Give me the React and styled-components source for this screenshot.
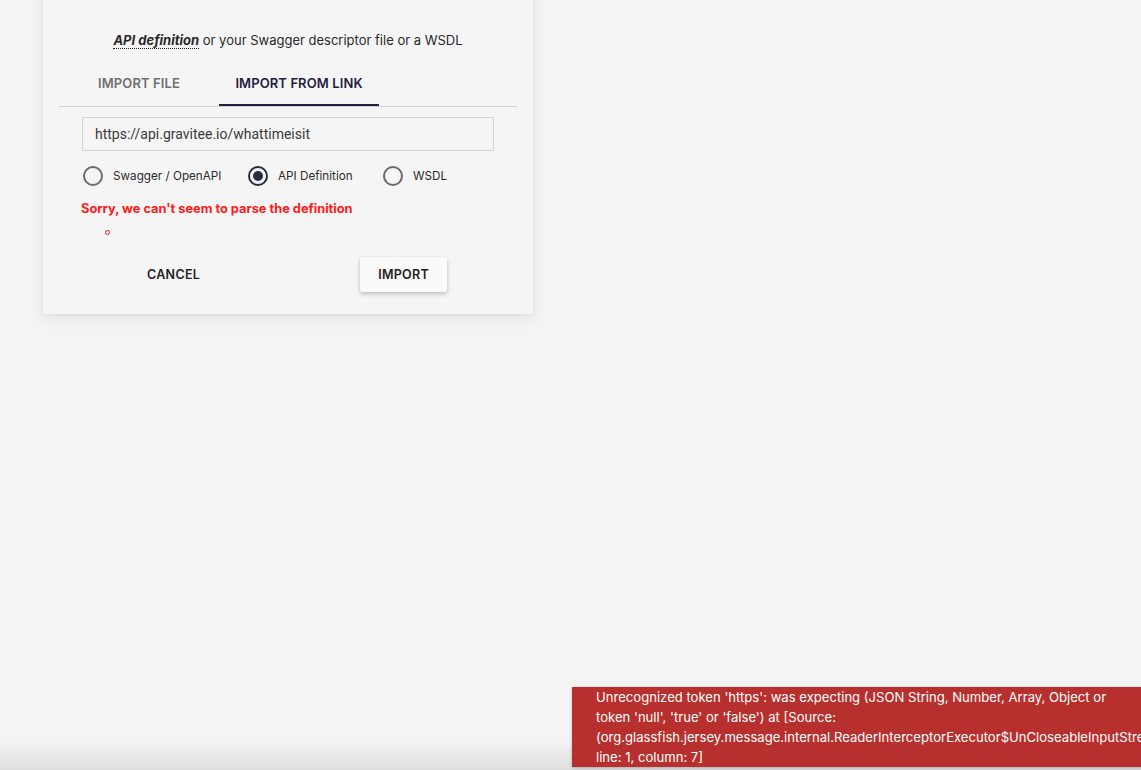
import React, { useState } from "react";
import styled, { createGlobalStyle } from "styled-components";

const Global = createGlobalStyle`
  html, body {
    margin: 0;
    padding: 0;
    background: #f4f4f4;
    font-family: Inter, "Liberation Sans", sans-serif;
  }
  #root {
    height: 770px;
    overflow: hidden;
    position: relative;
  }
`;

const Page = styled.div`
  height: 770px;
  display: flex;
  flex-direction: column;
  position: relative;
`;

const Main = styled.div`
  flex: 1;
  padding-left: 43px;
`;

const Footer = styled.div`
  height: 28px;
  background: linear-gradient(#f3f3f3, #dedede);
`;

const Dialog = styled.div`
  width: 490px;
  margin-top: -20px;
  padding: 20px 16px 22px;
  box-sizing: border-box;
  background: #f5f5f5;
  box-shadow: 0 4px 14px rgba(0, 0, 0, 0.08), 0 1px 3px rgba(0, 0, 0, 0.04);
`;

const Lead = styled.p`
  margin: 31px 0 0;
  text-align: center;
  font-size: 13px;
  color: #2a2a2a;
  line-height: 18px;
`;

const Term = styled.span`
  font-weight: 700;
  font-style: italic;
  border-bottom: 1px dotted #222;
`;

const Tabs = styled.div`
  display: flex;
  margin-top: 11px;
  border-bottom: 1px solid #d2d2d2;
`;

const Tab = styled.button`
  width: 160px;
  height: 46px;
  border: 0;
  background: transparent;
  font-family: inherit;
  font-size: 13px;
  font-weight: 600;
  letter-spacing: 0.1px;
  color: ${(p) => (p.$active ? "#1f2040" : "#707070")};
  box-shadow: ${(p) => (p.$active ? "inset 0 -2px 0 #1f2040" : "none")};
  padding: 0;
  cursor: pointer;
`;

const Body = styled.div`
  padding: 10px 23px 0;
`;

const Input = styled.input`
  display: block;
  width: 100%;
  height: 34px;
  box-sizing: border-box;
  border: 1px solid #d4d4d4;
  background: #f5f5f5;
  padding: 0 12px;
  font-family: Roboto, "Liberation Sans", sans-serif;
  font-size: 14px;
  color: #3a3a3a;
  outline: none;
`;

const Radios = styled.div`
  display: flex;
  margin-top: 15px;
`;

const RadioLabel = styled.label`
  display: flex;
  align-items: center;
  width: ${(p) => p.$w}px;
  font-size: 11.7px;
  color: #2c2c2c;
  cursor: pointer;
`;

const Circle = styled.span`
  width: 20px;
  height: 20px;
  box-sizing: border-box;
  border-radius: 50%;
  border: 2px solid ${(p) => (p.$on ? "#2a2b45" : "#6b6b6b")};
  margin: 0 10px 0 1px;
  display: flex;
  align-items: center;
  justify-content: center;
  &::after {
    content: "";
    width: 10px;
    height: 10px;
    border-radius: 50%;
    background: #2a2b45;
    display: ${(p) => (p.$on ? "block" : "none")};
  }
`;

const ErrorText = styled.div`
  margin: 15px 0 0 -1px;
  font-size: 12.8px;
  font-weight: 700;
  color: #ff1a1a;
`;

const Bullets = styled.ul`
  margin: 14px 0 0;
  padding-left: 23px;
  list-style: none;
  height: 12px;
`;

const Bullet = styled.li`
  width: 5px;
  height: 5px;
  border: 1px solid #ff1a1a;
  border-radius: 50%;
  box-sizing: border-box;
`;

const Actions = styled.div`
  display: flex;
  justify-content: space-between;
  align-items: center;
  margin-top: 15px;
  padding: 0 47px;
`;

const Btn = styled.button`
  height: 35px;
  padding: 0 18px;
  border: 0;
  border-radius: 2px;
  font-family: inherit;
  font-size: 12.5px;
  font-weight: 600;
  letter-spacing: 0.3px;
  color: #222;
  background: ${(p) => (p.$raised ? "#fafafa" : "transparent")};
  box-shadow: ${(p) =>
    p.$raised ? "0 2px 4px rgba(0,0,0,0.22), 0 0 1px rgba(0,0,0,0.1)" : "none"};
  cursor: pointer;
`;

const Toast = styled.div`
  position: absolute;
  left: 572px;
  top: 687px;
  width: 600px;
  height: 80px;
  box-sizing: border-box;
  padding: 0 0 0 24px;
  background: #b7302d;
  color: #fff;
  font-size: 13.1px;
  line-height: 20px;
  white-space: nowrap;
  overflow: hidden;
  box-shadow: 0 1px 3px rgba(0, 0, 0, 0.25);
`;

const types = [
  { id: "swagger", label: "Swagger / OpenAPI", w: 165 },
  { id: "api", label: "API Definition", w: 135 },
  { id: "wsdl", label: "WSDL", w: 100 },
];

export default function App() {
  const [tab, setTab] = useState(1);
  const [type, setType] = useState("api");

  return (
    <Page>
      <Global />
      <Main>
        <Dialog>
          <Lead>
            <Term>API definition</Term> or your Swagger descriptor file or a WSDL
          </Lead>
          <Tabs>
            <Tab $active={tab === 0} onClick={() => setTab(0)}>
              IMPORT FILE
            </Tab>
            <Tab $active={tab === 1} onClick={() => setTab(1)}>
              IMPORT FROM LINK
            </Tab>
          </Tabs>
          <Body>
            <Input defaultValue="https://api.gravitee.io/whattimeisit" />
            <Radios>
              {types.map((t) => (
                <RadioLabel key={t.id} $w={t.w} onClick={() => setType(t.id)}>
                  <Circle $on={type === t.id} />
                  {t.label}
                </RadioLabel>
              ))}
            </Radios>
            <ErrorText>Sorry, we can't seem to parse the definition</ErrorText>
            <Bullets>
              <Bullet />
            </Bullets>
            <Actions>
              <Btn>CANCEL</Btn>
              <Btn $raised>IMPORT</Btn>
            </Actions>
          </Body>
        </Dialog>
      </Main>
      <Footer />
      <Toast>
        Unrecognized token 'https': was expecting (JSON String, Number, Array, Object or
        <br />
        token 'null', 'true' or 'false') at [Source:
        <br />
        (org.glassfish.jersey.message.internal.ReaderInterceptorExecutor$UnCloseableInputStream);
        <br />
        line: 1, column: 7]
      </Toast>
    </Page>
  );
}
